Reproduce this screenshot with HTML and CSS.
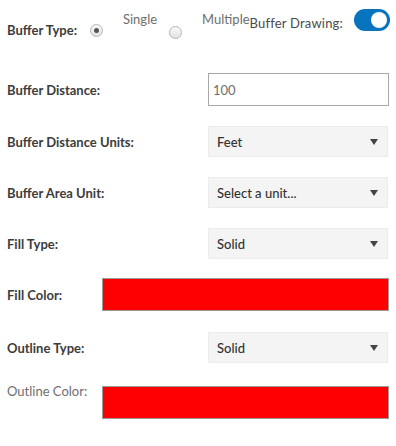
FILE: index.html
```html
<!DOCTYPE html>
<html lang="en">
<head>
    <meta charset="UTF-8">
    <title>Buffer Settings</title>
    <link rel="stylesheet" href="styles.css">
</head>
<body>
    <div class="buffer-panel">
        <div class="type-row">
            <span class="field-label type-label">Buffer Type:</span>
            <span class="radio checked"></span>
            <span class="radio-text single-text">Single</span>
            <span class="radio second"></span>
            <span class="radio-text">Multiple</span>
            <span class="drawing-text">Buffer Drawing:</span>
            <span class="toggle"><span class="toggle-knob"></span></span>
        </div>

        <div class="field-row">
            <span class="field-label">Buffer Distance:</span>
            <input type="text" class="text-input" value="100">
        </div>

        <div class="field-row">
            <span class="field-label">Buffer Distance Units:</span>
            <div class="select-box">Feet<span class="arrow"></span></div>
        </div>

        <div class="field-row">
            <span class="field-label">Buffer Area Unit:</span>
            <div class="select-box">Select a unit...<span class="arrow"></span></div>
        </div>

        <div class="field-row">
            <span class="field-label">Fill Type:</span>
            <div class="select-box">Solid<span class="arrow"></span></div>
        </div>

        <div class="field-row color-row">
            <span class="field-label short">Fill Color:</span>
            <div class="color-swatch"></div>
        </div>

        <div class="field-row outline-row">
            <span class="field-label">Outline Type:</span>
            <div class="select-box">Solid<span class="arrow"></span></div>
        </div>

        <div class="field-row color-row outline-color">
            <span class="field-label short light">Outline Color:</span>
            <div class="color-swatch"></div>
        </div>
    </div>
</body>
</html>
```
FILE: styles.css
```css
body {
    margin: 0;
    background: #fff;
    font-family: 'Lato', 'Noto Sans', sans-serif;
    font-size: 13px;
    color: #323232;
}
.buffer-panel {
    padding: 8px 7px 0 7px;
    display: flex;
    flex-direction: column;
}
.field-label {
    width: 201px;
    font-weight: 700;
    color: #3c3c3c;
    white-space: nowrap;
    flex-shrink: 0;
}
.field-label.short {
    width: 95px;
}
.field-label.light {
    font-weight: 400;
    color: #6e6e6e;
    align-self: flex-start;
    margin-top: -3px;
}
.type-row {
    display: flex;
    align-items: flex-start;
    height: 40px;
    white-space: nowrap;
}
.type-row > span {
    flex-shrink: 0;
}
.type-label {
    width: auto;
    margin-top: 14px;
    margin-right: 13px;
}
.radio {
    width: 11px;
    height: 11px;
    border: 1px solid #b5b5b5;
    border-radius: 50%;
    background: linear-gradient(#fafafa, #e2e2e2);
    margin-top: 16px;
    position: relative;
}
.radio.checked::after {
    content: '';
    position: absolute;
    left: 3px;
    top: 3px;
    width: 5px;
    height: 5px;
    border-radius: 50%;
    background: #555;
}
.radio.second {
    margin-top: 18px;
}
.radio-text {
    color: #6e6e6e;
    margin: 3px 0 0 20px;
}
.single-text {
    margin-right: 12px;
}
.drawing-text {
    color: #4a4a4a;
    margin-top: 7px;
    letter-spacing: 0.2px;
}
.toggle {
    width: 36px;
    height: 22px;
    margin: 1px 0 0 11px;
    border-radius: 11px;
    background: #0774bd;
    position: relative;
}
.toggle-knob {
    position: absolute;
    right: 3px;
    top: 3px;
    width: 16px;
    height: 16px;
    border-radius: 50%;
    background: #fff;
}
.field-row {
    display: flex;
    align-items: center;
    margin-top: 20px;
}
.type-row + .field-row {
    margin-top: 25px;
}
.text-input {
    width: 181px;
    height: 33px;
    box-sizing: border-box;
    border: 1px solid #a9a9a9;
    padding: 0 4px;
    font-family: inherit;
    font-size: 13px;
    color: #6e6e6e;
    margin: 0;
}
.select-box {
    width: 180px;
    height: 31px;
    box-sizing: border-box;
    background: #f4f4f4;
    border: 1px solid #ececec;
    padding: 0 8px;
    display: flex;
    align-items: center;
    justify-content: space-between;
    font-weight: 500;
    color: #323232;
}
.arrow {
    width: 0;
    height: 0;
    border-left: 4px solid transparent;
    border-right: 4px solid transparent;
    border-top: 6px solid #444;
    margin-right: 1px;
}
.color-swatch {
    width: 287px;
    height: 33px;
    box-sizing: border-box;
    border: 1px solid #9a9a9a;
    background: #ff0000;
}
.color-row {
    margin-top: 19px;
}
.outline-row {
    margin-top: 21px;
}
.outline-color {
    margin-top: 23px;
    align-items: flex-start;
}
```
